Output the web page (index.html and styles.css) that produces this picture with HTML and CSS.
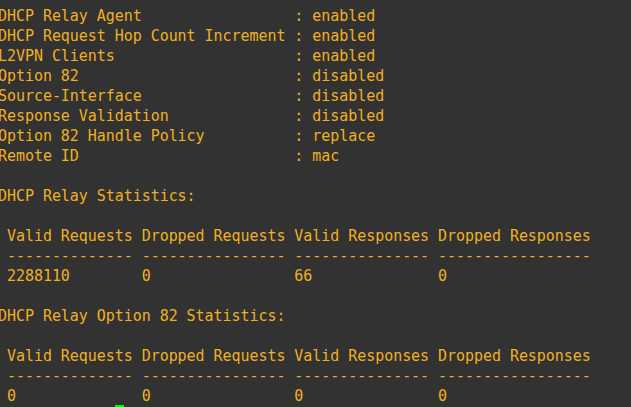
FILE: index.html
```html
<!DOCTYPE html>
<html>
<head>
<meta charset="utf-8">
<link rel="stylesheet" href="styles.css">
</head>
<body>
<pre class="term">DHCP Relay Agent                 : enabled
DHCP Request Hop Count Increment : enabled
L2VPN Clients                    : enabled
Option 82                        : disabled
Source-Interface                 : disabled
Response Validation              : disabled
Option 82 Handle Policy          : replace
Remote ID                        : mac

DHCP Relay Statistics:

 Valid Requests Dropped Requests Valid Responses Dropped Responses
 -------------- ---------------- --------------- -----------------
 2288110        0                66              0

DHCP Relay Option 82 Statistics:

 Valid Requests Dropped Requests Valid Responses Dropped Responses
 -------------- ---------------- --------------- -----------------
 0              0                0               0
             <span class="cursor"> </span></pre>
</body>
</html>
```
FILE: styles.css
```css
html, body {
  margin: 0;
  padding: 0;
  background: #323232;
  width: 631px;
  height: 407px;
  overflow: hidden;
}
.term {
  margin: 6px 0 0 -2px;
  padding: 0;
  font-family: "DejaVu Sans Mono", monospace;
  font-size: 15px;
  letter-spacing: -0.05px;
  line-height: 20px;
  color: #f0b020;
}
.cursor {
  display: inline-block;
  width: 9px;
  height: 20px;
  vertical-align: top;
  background: #00ff00;
  margin-top: -1px;
}
```
